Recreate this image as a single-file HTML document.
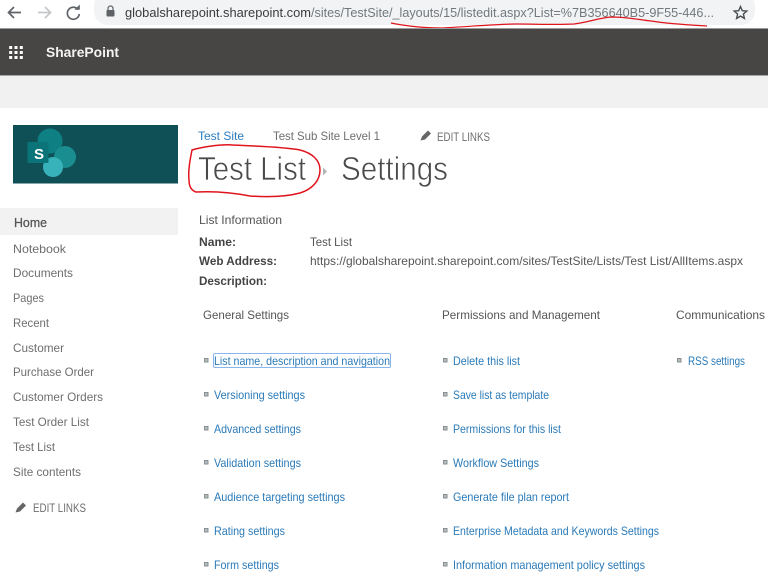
<!DOCTYPE html>
<html>
<head>
<meta charset="utf-8">
<style>
html,body{margin:0;padding:0;background:#fff;width:768px;height:585px;overflow:hidden}
svg{display:block;filter:blur(0.35px)}
text{font-family:"Liberation Sans",sans-serif;font-size:12px;fill:#666}
.l{fill:#2a7ab8}
.n{fill:#6e6e6e}
.b{font-weight:bold;fill:#444}
.t{font-size:33px;fill:#4a4a4a;stroke:#fff;stroke-width:0.7px}
</style>
</head>
<body>
<svg width="768" height="585" viewBox="0 0 768 585" xmlns="http://www.w3.org/2000/svg">
<rect width="768" height="585" fill="#fff"/>
<!-- browser chrome -->
<rect x="94" y="-8" width="661" height="33" rx="14" fill="#f1f3f4"/>
<path d="M21 12.500H9M14 7L8.500 12.500L14 18" fill="none" stroke="#5f6368" stroke-width="1.700"/>
<path d="M38 12.500H50M45 7L50.500 12.500L45 18" fill="none" stroke="#c4c7ca" stroke-width="1.700"/>
<path d="M78 9.500A6 6 0 1 0 79.300 14" fill="none" stroke="#5f6368" stroke-width="1.700"/>
<path d="M74.500 9.800H79.800V4.500Z" fill="#5f6368"/>
<rect x="106.500" y="10" width="8" height="6.500" rx="1" fill="#5f6368"/>
<path d="M108 10V8.500a2.500 2.500 0 0 1 5 0V10" fill="none" stroke="#5f6368" stroke-width="1.200"/>
<text x="125" y="17" style="font-size:13px;fill:#3a3b3e" textLength="186" lengthAdjust="spacingAndGlyphs">globalsharepoint.sharepoint.com</text>
<text x="311" y="17" style="font-size:13px;fill:#74787c" textLength="403" lengthAdjust="spacingAndGlyphs">/sites/TestSite/_layouts/15/listedit.aspx?List=%7B356640B5-9F55-446...</text>
<path d="M740.500 6.500L742.300 10.700L746.800 11.100L743.400 14L744.400 18.400L740.500 16.100L736.600 18.400L737.600 14L734.200 11.100L738.700 10.700Z" fill="none" stroke="#4a4d50" stroke-width="1.400"/>
<path d="M391 23C405 26 425 28 441 28C465 27 495 24 517 24C535 24 558 25 574 24C590 22 598 18 611 17C628 17 640 20 651 21C670 24 690 25 707 26" fill="none" stroke="#e0141c" stroke-width="1.200"/>
<!-- suite bar -->
<rect x="0" y="28" width="768" height="1.500" fill="#9a9a9a"/>
<rect x="0" y="29" width="768" height="46" fill="#484644"/>
<rect x="0" y="75" width="768" height="1" fill="#a8a8a8"/>
<rect x="0" y="76" width="768" height="32" fill="#f1f1f1"/>
<g fill="#ffffff">
<rect x="9.200" y="46" width="3" height="3"/><rect x="14.500" y="46" width="3" height="3"/><rect x="19.800" y="46" width="3" height="3"/>
<rect x="9.200" y="51" width="3" height="3"/><rect x="14.500" y="51" width="3" height="3"/><rect x="19.800" y="51" width="3" height="3"/>
<rect x="9.200" y="56" width="3" height="3"/><rect x="14.500" y="56" width="3" height="3"/><rect x="19.800" y="56" width="3" height="3"/>
</g>
<text x="46" y="57" style="font-size:14px;font-weight:bold;fill:#f4f4f4" textLength="73" lengthAdjust="spacingAndGlyphs">SharePoint</text>
<!-- logo -->
<rect x="13" y="125" width="165" height="58.500" fill="#0f5056"/>
<circle cx="50" cy="141" r="12.500" fill="#0e7f82"/>
<circle cx="65" cy="157" r="11" fill="#1a8d90"/>
<circle cx="53" cy="167" r="10" fill="#38b2ba"/>
<rect x="27.500" y="142" width="21" height="21" rx="1" fill="#0b7478"/>
<text x="34" y="159" style="font-size:15px;font-weight:bold;fill:#fff">S</text>
<!-- breadcrumb -->
<text x="198" y="140" style="fill:#2b7cc0" textLength="46" lengthAdjust="spacingAndGlyphs">Test Site</text>
<text x="273" y="140" style="fill:#6e6e6e" textLength="107" lengthAdjust="spacingAndGlyphs">Test Sub Site Level 1</text>
<path d="M420.500 140.500L422 136.500L428 130.500L431 133.500L425 139.500Z" fill="#666"/>
<text x="437" y="141" style="fill:#6e6e6e" textLength="53" lengthAdjust="spacingAndGlyphs">EDIT LINKS</text>
<text x="198" y="180" class="t" textLength="108" lengthAdjust="spacingAndGlyphs">Test List</text>
<text x="341" y="180" class="t" textLength="107" lengthAdjust="spacingAndGlyphs">Settings</text>
<path d="M323 167.500L327 171.500L323 175.500Z" fill="#b5b5b5"/>
<path d="M192 150C205 146 225 144 233 145C255 146 285 147 300 150C312 153 320 160 320 170C320 180 313 189 300 193C285 197 265 197 250 196C235 193 215 191 196 192C190 190 189 184 189 180C188 170 190 160 192 150Z" fill="none" stroke="#e0141c" stroke-width="1.500"/>
<!-- left nav -->
<rect x="0" y="208" width="178" height="27" fill="#f2f2f2"/>
<text x="14" y="227" style="font-size:12.500px;fill:#555;stroke:#555;stroke-width:0.25px" textLength="33" lengthAdjust="spacingAndGlyphs">Home</text>
<text x="13" y="253" class="n" textLength="53" lengthAdjust="spacingAndGlyphs">Notebook</text>
<text x="13" y="277" class="n" textLength="60" lengthAdjust="spacingAndGlyphs">Documents</text>
<text x="13" y="302" class="n" textLength="31" lengthAdjust="spacingAndGlyphs">Pages</text>
<text x="13" y="327" class="n" textLength="36" lengthAdjust="spacingAndGlyphs">Recent</text>
<text x="13" y="352" class="n" textLength="51" lengthAdjust="spacingAndGlyphs">Customer</text>
<text x="13" y="376" class="n" textLength="81" lengthAdjust="spacingAndGlyphs">Purchase Order</text>
<text x="13" y="401" class="n" textLength="90" lengthAdjust="spacingAndGlyphs">Customer Orders</text>
<text x="13" y="426" class="n" textLength="76" lengthAdjust="spacingAndGlyphs">Test Order List</text>
<text x="13" y="451" class="n" textLength="42" lengthAdjust="spacingAndGlyphs">Test List</text>
<text x="13" y="476" class="n" textLength="68" lengthAdjust="spacingAndGlyphs">Site contents</text>
<path d="M15.500 512.500L17 508.500L23 502.500L26 505.500L20 511.500Z" fill="#666"/>
<text x="33" y="512" class="n" textLength="53" lengthAdjust="spacingAndGlyphs">EDIT LINKS</text>
<!-- list information -->
<text x="199" y="224" style="fill:#555" textLength="83" lengthAdjust="spacingAndGlyphs">List Information</text>
<text x="199" y="246" class="b" textLength="37" lengthAdjust="spacingAndGlyphs">Name:</text>
<text x="310" y="246" style="fill:#555" textLength="42" lengthAdjust="spacingAndGlyphs">Test List</text>
<text x="199" y="265" class="b" textLength="78" lengthAdjust="spacingAndGlyphs">Web Address:</text>
<text x="310" y="265" style="fill:#555" textLength="433" lengthAdjust="spacingAndGlyphs">https://globalsharepoint.sharepoint.com/sites/TestSite/Lists/Test List/AllItems.aspx</text>
<text x="199" y="285" class="b" textLength="68" lengthAdjust="spacingAndGlyphs">Description:</text>
<!-- section headings -->
<text x="203" y="319" style="fill:#555" textLength="86" lengthAdjust="spacingAndGlyphs">General Settings</text>
<text x="442" y="319" style="fill:#555" textLength="158" lengthAdjust="spacingAndGlyphs">Permissions and Management</text>
<text x="676" y="319" style="fill:#555" textLength="89" lengthAdjust="spacingAndGlyphs">Communications</text>
<!-- bullets -->
<g fill="#b4bcc0" stroke="#8a8f92" stroke-width="1">
<rect x="204.500" y="358.500" width="3.500" height="3.500"/><rect x="204.500" y="392.500" width="3.500" height="3.500"/><rect x="204.500" y="426.500" width="3.500" height="3.500"/><rect x="204.500" y="460.500" width="3.500" height="3.500"/><rect x="204.500" y="494.500" width="3.500" height="3.500"/><rect x="204.500" y="528.500" width="3.500" height="3.500"/><rect x="204.500" y="562.500" width="3.500" height="3.500"/>
<rect x="443.500" y="358.500" width="3.500" height="3.500"/><rect x="443.500" y="392.500" width="3.500" height="3.500"/><rect x="443.500" y="426.500" width="3.500" height="3.500"/><rect x="443.500" y="460.500" width="3.500" height="3.500"/><rect x="443.500" y="494.500" width="3.500" height="3.500"/><rect x="443.500" y="528.500" width="3.500" height="3.500"/><rect x="443.500" y="562.500" width="3.500" height="3.500"/>
<rect x="677.500" y="358.500" width="3.500" height="3.500"/>
</g>
<!-- focus box -->
<rect x="213.500" y="353.500" width="177" height="14" rx="1.500" fill="#fff" stroke="#8ab6ee" stroke-width="1"/>
<!-- links col 1 -->
<text x="214" y="365" class="l" textLength="176" lengthAdjust="spacingAndGlyphs">List name, description and navigation</text>
<text x="214" y="399" class="l" textLength="91" lengthAdjust="spacingAndGlyphs">Versioning settings</text>
<text x="214" y="433" class="l" textLength="87" lengthAdjust="spacingAndGlyphs">Advanced settings</text>
<text x="214" y="467" class="l" textLength="87" lengthAdjust="spacingAndGlyphs">Validation settings</text>
<text x="214" y="501" class="l" textLength="131" lengthAdjust="spacingAndGlyphs">Audience targeting settings</text>
<text x="214" y="535" class="l" textLength="71" lengthAdjust="spacingAndGlyphs">Rating settings</text>
<text x="214" y="569" class="l" textLength="65" lengthAdjust="spacingAndGlyphs">Form settings</text>
<!-- links col 2 -->
<text x="453" y="365" class="l" textLength="67" lengthAdjust="spacingAndGlyphs">Delete this list</text>
<text x="453" y="399" class="l" textLength="96" lengthAdjust="spacingAndGlyphs">Save list as template</text>
<text x="453" y="433" class="l" textLength="108" lengthAdjust="spacingAndGlyphs">Permissions for this list</text>
<text x="453" y="467" class="l" textLength="86" lengthAdjust="spacingAndGlyphs">Workflow Settings</text>
<text x="453" y="501" class="l" textLength="116" lengthAdjust="spacingAndGlyphs">Generate file plan report</text>
<text x="453" y="535" class="l" textLength="206" lengthAdjust="spacingAndGlyphs">Enterprise Metadata and Keywords Settings</text>
<text x="453" y="569" class="l" textLength="192" lengthAdjust="spacingAndGlyphs">Information management policy settings</text>
<!-- links col 3 -->
<text x="688" y="365" class="l" textLength="57" lengthAdjust="spacingAndGlyphs">RSS settings</text>
</svg>
</body>
</html>
